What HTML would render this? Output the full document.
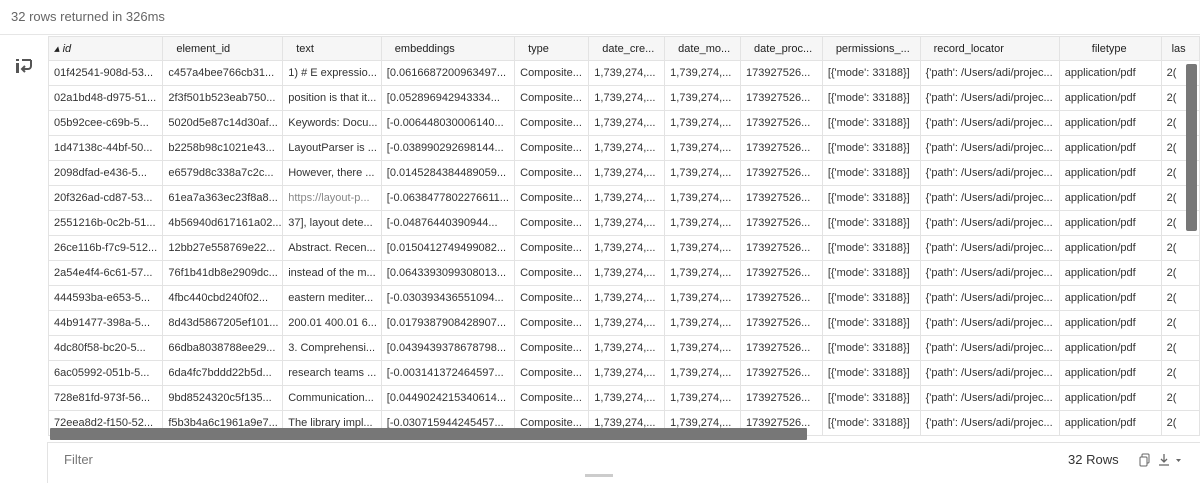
<!DOCTYPE html>
<html><head><style>
body{margin:0;width:1200px;height:477px;overflow:hidden;background:#fff;font-family:"Liberation Sans",sans-serif;color:#333;position:relative}
.cap{position:absolute;left:11px;top:9px;font-size:13px;color:#666}
.topline{position:absolute;left:0;right:0;top:34px;border-top:1px solid #e6e6e6}
.icon{position:absolute;left:15px;top:58px}
table{position:absolute;left:48px;top:36px;border-collapse:collapse;font-size:11px;table-layout:fixed}
td,th{border:1px solid #e3e3e3;height:24px;padding:0 0 0 5px;white-space:nowrap;overflow:hidden;text-align:left}
th{background:#f6f6f6;font-weight:normal;color:#222;height:23px;padding-left:13px}
.hs{position:absolute;left:50px;top:428px;width:757px;height:12px;background:#777;border-radius:1px}
.vs{position:absolute;left:1186px;top:64px;width:11px;height:167px;background:#777;border-radius:2px}
.foot{position:absolute;left:47px;top:442px;width:1160px;height:40px;border:1px solid #e3e3e3;border-bottom:none}
.filter{position:absolute;left:64px;top:452px;font-size:13px;color:#777}
.rows{position:absolute;left:1068px;top:452px;font-size:13px;color:#333}
.grip{position:absolute;left:585px;top:474px;width:28px;height:3px;background:#ccc}
.g{color:#888}
</style></head><body>
<div class="cap">32 rows returned in 326ms</div>
<div class="topline"></div>
<svg class="icon" width="18" height="16" viewBox="0 0 18 16"><rect x="1" y="1" width="3" height="2" fill="#555"/><rect x="1" y="5" width="3" height="10" fill="#555"/><path d="M7 2h9M16 2v6a3 3 0 0 1-3 3H8M10 8l-3 3 3 3" stroke="#555" stroke-width="2" fill="none"/></svg>
<table>
<colgroup><col style="width:115px"><col style="width:120px"><col style="width:99px"><col style="width:134px"><col style="width:75px"><col style="width:77px"><col style="width:77px"><col style="width:83px"><col style="width:99px"><col style="width:140px"><col style="width:105px"><col style="width:40px"></colgroup>
<tr><th style="padding-left:5px"><i>▴ id</i></th><th>element_id</th><th>text</th><th>embeddings</th><th>type</th><th>date_cre...</th><th>date_mo...</th><th>date_proc...</th><th>permissions_...</th><th>record_locator</th><th style="padding-left:32px">filetype</th><th style="padding-left:10px">las</th></tr>
<tbody id="b"></tbody>
</table>
<script>
var d=[["01f42541-908d-53...","c457a4bee766cb31...","1) # E expressio...","[0.0616687200963497..."],
["02a1bd48-d975-51...","2f3f501b523eab750...","position is that it...","[0.052896942943334..."],
["05b92cee-c69b-5...","5020d5e87c14d30af...","Keywords: Docu...","[-0.006448030006140..."],
["1d47138c-44bf-50...","b2258b98c1021e43...","LayoutParser is ...","[-0.038990292698144..."],
["2098dfad-e436-5...","e6579d8c338a7c2c...","However, there ...","[0.0145284384489059..."],
["20f326ad-cd87-53...","61ea7a363ec23f8a8...","<span class=g>https://layout-p...</span>","[-0.0638477802276611..."],
["2551216b-0c2b-51...","4b56940d617161a02...","37], layout dete...","[-0.04876440390944..."],
["26ce116b-f7c9-512...","12bb27e558769e22...","Abstract. Recen...","[0.0150412749499082..."],
["2a54e4f4-6c61-57...","76f1b41db8e2909dc...","instead of the m...","[0.0643393099308013..."],
["444593ba-e653-5...","4fbc440cbd240f02...","eastern mediter...","[-0.030393436551094..."],
["44b91477-398a-5...","8d43d5867205ef101...","200.01 400.01 6...","[0.0179387908428907..."],
["4dc80f58-bc20-5...","66dba8038788ee29...","3. Comprehensi...","[0.0439439378678798..."],
["6ac05992-051b-5...","6da4fc7bddd22b5d...","research teams ...","[-0.003141372464597..."],
["728e81fd-973f-56...","9bd8524320c5f135...","Communication...","[0.0449024215340614..."],
["72eea8d2-f150-52...","f5b3b4a6c1961a9e7...","The library impl...","[-0.030715944245457..."]];
var h="";d.forEach(function(r){h+="<tr><td>"+r[0]+"</td><td>"+r[1]+"</td><td>"+r[2]+"</td><td>"+r[3]+"</td><td>Composite...</td><td>1,739,274,...</td><td>1,739,274,...</td><td>173927526...</td><td>[{'mode': 33188}]</td><td>{'path': /Users/adi/projec...</td><td>application/pdf</td><td>2(</td></tr>"});
document.getElementById("b").innerHTML=h;
</script>
<div class="hs"></div>
<div class="vs"></div>
<div class="foot"></div>
<div class="filter">Filter</div>
<div class="rows">32 Rows</div>
<svg style="position:absolute;left:1138px;top:453px" width="14" height="14" viewBox="0 0 14 14"><rect x="4" y="1" width="7" height="9" rx="1" stroke="#666" fill="none"/><rect x="2" y="4" width="7" height="9" rx="1" stroke="#666" fill="#fff"/></svg>
<svg style="position:absolute;left:1158px;top:453px" width="28" height="14" viewBox="0 0 28 14"><path d="M6 1v8M3 6l3 3 3-3M1 12h10" stroke="#666" fill="none" stroke-width="1.3"/><path d="M18 6h5l-2.5 3z" fill="#666"/></svg>
<div class="grip"></div>
</body></html>
